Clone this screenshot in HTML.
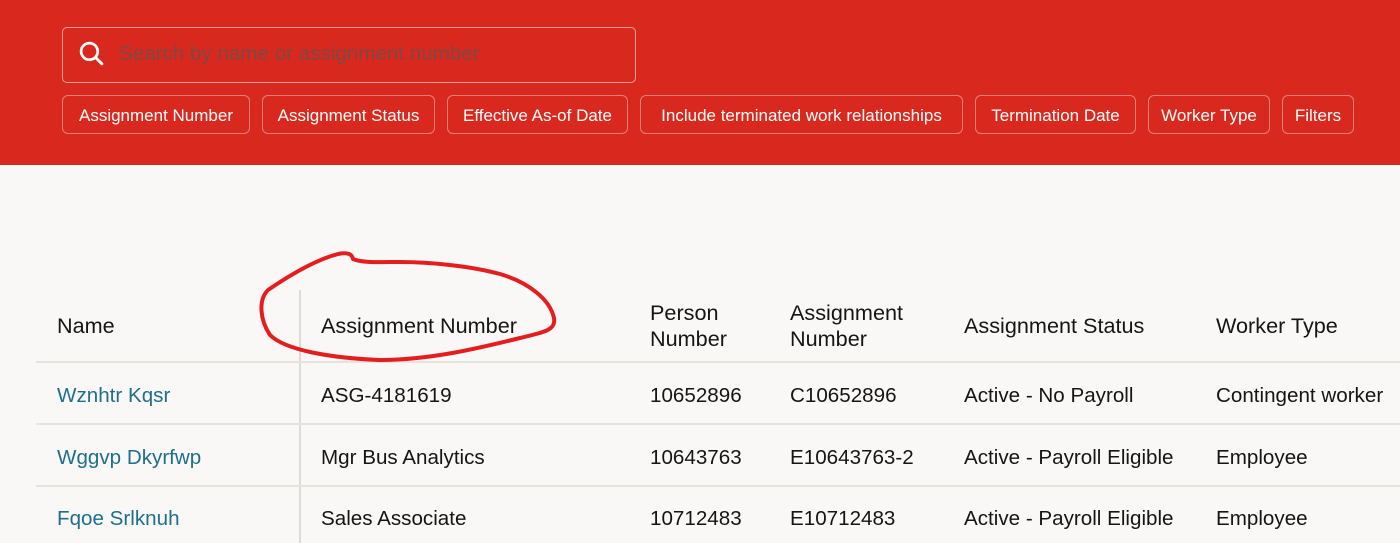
<!DOCTYPE html>
<html><head><meta charset="utf-8"><style>
body{margin:0;width:1400px;height:543px;background:#f9f8f6;font-family:"Liberation Sans",sans-serif;position:relative;overflow:hidden}
.hdr{position:absolute;left:0;top:0;width:1400px;height:165px;background:#d9291e}
.search{position:absolute;left:62px;top:27px;width:572px;height:54px;border:1px solid rgba(255,255,255,.55);border-radius:5px}
.ph{position:absolute;left:119px;top:43px;font-size:20px;color:#7e4843;transform:scaleX(1.03);transform-origin:left;white-space:nowrap}
.chip{position:absolute;top:95px;height:37px;border:1px solid rgba(255,255,255,.4);border-radius:6px;color:#fff;font-size:17px;line-height:39px;text-align:center;white-space:nowrap;overflow:hidden}
.chip span{display:inline-block}
.t{position:absolute;font-size:20px;color:#161513;white-space:nowrap;transform:scaleX(1.03);transform-origin:left;line-height:26px}
.hd{font-size:21px;transform:scaleX(1.03)}
.l{color:#1e6f8c}
.line{position:absolute;left:36px;width:1364px;height:2px;background:#e6e3df}
</style></head><body>
<div class="hdr"></div>
<div class="search"></div>
<svg style="position:absolute;left:78px;top:40px" width="27" height="27" viewBox="0 0 26 26"><circle cx="11" cy="11" r="8" fill="none" stroke="#fff" stroke-width="2.6"/><line x1="17" y1="17" x2="23" y2="23" stroke="#fff" stroke-width="2.8" stroke-linecap="round"/></svg>
<div class="ph">Search by name or assignment number</div>
<div class="chip" style="left:62px;width:186px"><span>Assignment Number</span></div>
<div class="chip" style="left:262px;width:171px"><span>Assignment Status</span></div>
<div class="chip" style="left:447px;width:179px"><span>Effective As-of Date</span></div>
<div class="chip" style="left:640px;width:321px"><span>Include terminated work relationships</span></div>
<div class="chip" style="left:975px;width:159px"><span>Termination Date</span></div>
<div class="chip" style="left:1148px;width:120px"><span>Worker Type</span></div>
<div class="chip" style="left:1282px;width:70px"><span>Filters</span></div>

<div style="position:absolute;left:299px;top:290px;width:2px;height:253px;background:#dedbd7"></div>
<div class="line" style="top:361px"></div>
<div class="line" style="top:423px"></div>
<div class="line" style="top:485px"></div>

<div class="t hd" style="left:57px;top:314px">Name</div>
<div class="t hd" style="left:321px;top:314px">Assignment Number</div>
<div class="t hd" style="left:650px;top:301px">Person<br>Number</div>
<div class="t hd" style="left:790px;top:301px">Assignment<br>Number</div>
<div class="t hd" style="left:964px;top:314px">Assignment Status</div>
<div class="t hd" style="left:1216px;top:314px">Worker Type</div>

<div class="t l" style="left:57px;top:383px">Wznhtr Kqsr</div>
<div class="t" style="left:321px;top:383px">ASG-4181619</div>
<div class="t" style="left:650px;top:383px">10652896</div>
<div class="t" style="left:790px;top:383px">C10652896</div>
<div class="t" style="left:964px;top:383px">Active - No Payroll</div>
<div class="t" style="left:1216px;top:383px">Contingent worker</div>

<div class="t l" style="left:57px;top:445px">Wggvp Dkyrfwp</div>
<div class="t" style="left:321px;top:445px">Mgr Bus Analytics</div>
<div class="t" style="left:650px;top:445px">10643763</div>
<div class="t" style="left:790px;top:445px">E10643763-2</div>
<div class="t" style="left:964px;top:445px">Active - Payroll Eligible</div>
<div class="t" style="left:1216px;top:445px">Employee</div>

<div class="t l" style="left:57px;top:506px">Fqoe Srlknuh</div>
<div class="t" style="left:321px;top:506px">Sales Associate</div>
<div class="t" style="left:650px;top:506px">10712483</div>
<div class="t" style="left:790px;top:506px">E10712483</div>
<div class="t" style="left:964px;top:506px">Active - Payroll Eligible</div>
<div class="t" style="left:1216px;top:506px">Employee</div>

<svg style="position:absolute;left:0;top:0" width="1400" height="543"><path d="M353,259 C352,254 348,252 338,254 C315,260 290,275 268,290 C258,300 260,320 270,335 C285,350 330,358 380,360 C430,360 480,348 520,338 C545,332 556,330 554,318 C550,300 530,283 500,274 C470,266 430,262 400,262 C380,262 362,263 353,259 Z" fill="none" stroke="#e41e1e" stroke-width="4" stroke-linejoin="round"/></svg>
</body></html>
